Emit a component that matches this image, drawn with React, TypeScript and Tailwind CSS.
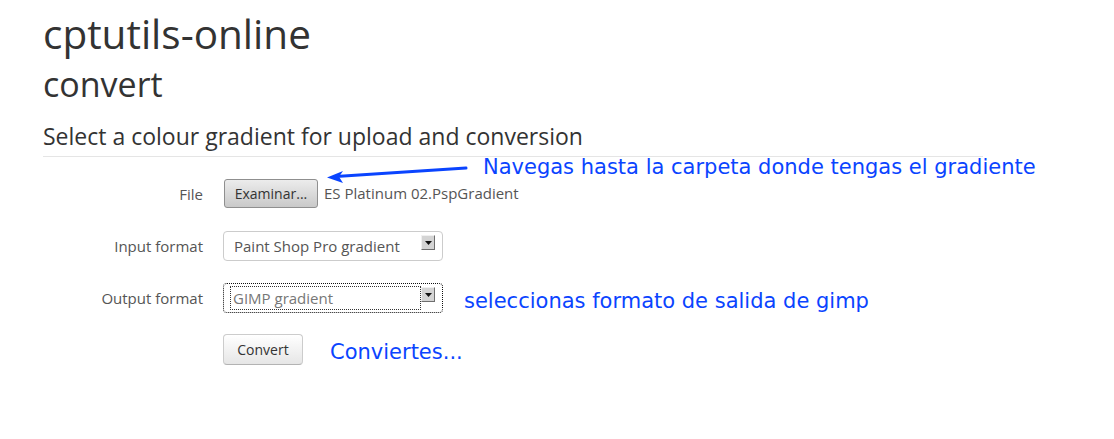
import React from "react";

const BLUE = "#0a44ff";

const SelectArrow = () => (
  <span className="absolute right-[7px] top-[3px] flex h-[15px] w-[14px] items-center justify-center border border-t-[#f0f0f0] border-l-[#f0f0f0] border-r-[#6e6e6e] border-b-[#6e6e6e] bg-[#d4d4d4]">
    <svg width="7" height="4" viewBox="0 0 7 4">
      <polygon points="0,0 7,0 3.5,4" fill="#111" />
    </svg>
  </span>
);

const Label = ({ children }: { children: React.ReactNode }) => (
  <label className="w-[160px] shrink-0 text-right text-[15px] leading-[20px] text-[#555]">{children}</label>
);

export default function App() {
  return (
    <div className="min-h-[439px] bg-white px-[43px] font-['Open_Sans',sans-serif] text-[#333]">
      <div className="w-[940px]">
        <h1 className="pt-[14px] text-[40.5px] leading-[40px] font-normal">cptutils-online</h1>
        <h2 className="mt-[10px] text-[34px] leading-[40px] font-normal">convert</h2>

        <form onSubmit={(e) => e.preventDefault()}>
          <div className="mt-[12px] border-b border-[#e5e5e5] text-[23px] leading-[40px]">
            Select a colour gradient for upload and conversion
          </div>

          {/* File */}
          <div className="relative mt-[22px] flex h-[29px] items-center">
            <Label>File</Label>
            <div className="ml-[21px] flex items-center">
              <button
                type="button"
                className="h-[29px] w-[94px] rounded-[3px] border border-[#8f8f8f] bg-gradient-to-b from-[#ececec] to-[#c9c9c9] text-[14px] text-[#333]"
              >
                Examinar...
              </button>
              <span className="ml-[6px] text-[15px] text-[#555]">ES Platinum 02.PspGradient</span>
            </div>

            {/* annotation overlay */}
            <svg className="absolute left-[277px] top-[-20px]" width="150" height="30" viewBox="0 0 150 30">
              <line x1="146" y1="9" x2="16" y2="17.5" stroke={BLUE} strokeWidth="3" strokeLinecap="round" />
              <polygon points="7,18.5 23,12 19,17.8 23,24" fill={BLUE} />
            </svg>
            <span
              className="absolute left-[440px] top-[-24px] whitespace-nowrap font-['DejaVu_Sans',sans-serif] text-[21px] leading-[24px]"
              style={{ color: BLUE }}
            >
              Navegas hasta la carpeta donde tengas el gradiente
            </span>
          </div>

          {/* Input format */}
          <div className="mt-[23px] flex h-[30px] items-center">
            <Label>Input format</Label>
            <div className="relative ml-[20px] flex h-[30px] w-[220px] items-center rounded-[4px] border border-[#ccc] bg-white pl-[10px] text-[15px] text-[#555]">
              Paint Shop Pro gradient
              <SelectArrow />
            </div>
          </div>

          {/* Output format */}
          <div className="mt-[22px] flex h-[30px] items-center">
            <Label>Output format</Label>
            <div className="relative ml-[20px] flex h-[30px] w-[220px] items-center rounded-[4px] border border-dotted border-[#111] bg-white p-[2px] pl-[6px] text-[15px] text-[#777]">
              <div className="flex h-[24px] w-[191px] items-center border border-dotted border-[#333] pl-[2px]">
                GIMP gradient
              </div>
              <SelectArrow />
            </div>
            <span
              className="ml-[21px] pt-[6px] whitespace-nowrap font-['DejaVu_Sans',sans-serif] text-[21px] leading-[24px]"
              style={{ color: BLUE }}
            >
              seleccionas formato de salida de gimp
            </span>
          </div>

          {/* Convert */}
          <div className="mt-[21px] flex h-[31px] items-center">
            <div className="w-[160px] shrink-0" />
            <button
              type="submit"
              className="ml-[20px] h-[31px] w-[80px] rounded-[4px] border border-[#ccc] border-b-[#b3b3b3] bg-gradient-to-b from-white to-[#e6e6e6] text-[14px] text-[#333]"
            >
              Convert
            </button>
            <span
              className="ml-[27px] pt-[4px] whitespace-nowrap font-['DejaVu_Sans',sans-serif] text-[21px] leading-[24px]"
              style={{ color: BLUE }}
            >
              Conviertes...
            </span>
          </div>
        </form>
      </div>
    </div>
  );
}
